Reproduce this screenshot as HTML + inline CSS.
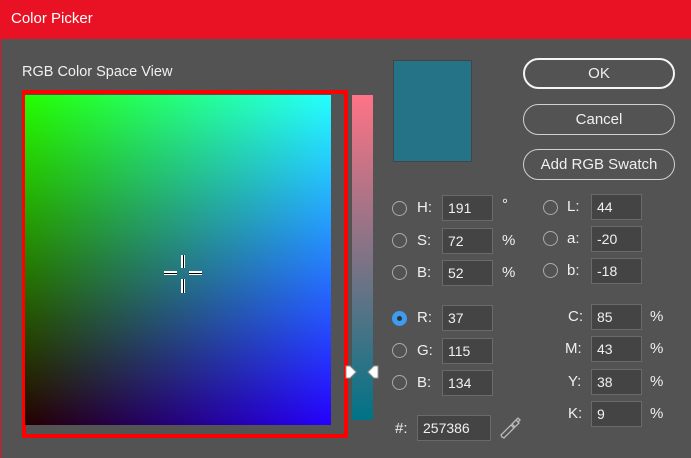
<!DOCTYPE html>
<html><head><style>
*{margin:0;padding:0;box-sizing:border-box}
body{width:691px;height:458px;background:#535353;font-family:"Liberation Sans",sans-serif;color:#f0f0f0;position:relative;overflow:hidden}
.a{position:absolute}
.title{left:0;top:0;width:691px;height:39px;background:#e81224;font-size:15px;line-height:37px;padding-left:11px;color:#fff}
.lbl{font-size:14px}
.inp{position:absolute;width:51px;height:26px;border:1px solid #6a6a6a;background:#444;font-size:14px;line-height:24px;padding-left:5px;color:#f0f0f0}
.rad{position:absolute;width:15px;height:15px;border:1px solid #aaa;border-radius:50%}
.t{position:absolute;font-size:15px;line-height:26px}
.btn{position:absolute;left:523px;width:152px;height:31px;border:1px solid #d0d0d0;border-radius:16px;text-align:center;font-size:15px;line-height:29px}
.bar{position:absolute;background:#fff}
.bar::after{content:"";position:absolute;background:#000}
.v{width:4px}.v::after{left:1.5px;top:0;width:1px;height:100%}
.h{height:4px}.h::after{top:1.5px;left:0;height:1px;width:100%}
</style></head><body>
<div class="a" style="left:0;top:0;width:1px;height:458px;background:#e8112d"></div>
<div class="a title">Color Picker</div>
<div class="a lbl" style="left:22px;top:64px;font-size:14.5px">RGB Color Space View</div>
<div class="a" style="left:22px;top:90px;width:326px;height:348px;border:4px solid #ff0000"></div>
<div class="a" style="left:25px;top:95px;width:306px;height:330px;background:linear-gradient(to right,rgb(37,0,0),rgb(37,0,255))">
<div style="position:absolute;inset:0;background:linear-gradient(to bottom,rgb(0,255,0),rgb(0,0,0));mix-blend-mode:screen"></div></div>
<div class="bar v" style="left:181px;top:255px;height:13px"></div>
<div class="bar v" style="left:181px;top:279px;height:14px"></div>
<div class="bar h" style="left:164px;top:271px;width:13px"></div>
<div class="bar h" style="left:189px;top:271px;width:13px"></div>
<div class="a" style="left:352px;top:95px;width:21px;height:325px;background:linear-gradient(to bottom,rgb(255,115,134),rgb(0,115,134))"></div>
<svg class="a" style="left:345px;top:364px" width="35" height="16"><path d="M1 2h4l6 6-6 6H1z" fill="#fff" stroke="#999"/><path d="M33 2h-4l-6 6 6 6h4z" fill="#fff" stroke="#999"/></svg>
<div class="a" style="left:393px;top:60px;width:79px;height:102px;background:#257386;border:1px solid #444"></div>
<div class="btn" style="top:58px;border:2px solid #f4f4f4;line-height:28px">OK</div>
<div class="btn" style="top:104px">Cancel</div>
<div class="btn" style="top:149px">Add RGB Swatch</div>

<div class="rad" style="left:392px;top:201px"></div><div class="t" style="left:417px;top:195px">H:</div><div class="inp" style="left:442px;top:195px">191</div><div class="t" style="left:502px;top:192px">°</div>
<div class="rad" style="left:392px;top:233px"></div><div class="t" style="left:417px;top:228px">S:</div><div class="inp" style="left:442px;top:228px">72</div><div class="t" style="left:502px;top:228px">%</div>
<div class="rad" style="left:392px;top:265px"></div><div class="t" style="left:417px;top:260px">B:</div><div class="inp" style="left:442px;top:260px">52</div><div class="t" style="left:502px;top:260px">%</div>
<div class="rad" style="left:392px;top:311px;background:#3d9bf0;border:none"><div style="position:absolute;left:5px;top:5px;width:5px;height:5px;border-radius:50%;background:#333"></div></div><div class="t" style="left:417px;top:305px">R:</div><div class="inp" style="left:442px;top:305px">37</div>
<div class="rad" style="left:392px;top:343px"></div><div class="t" style="left:417px;top:338px">G:</div><div class="inp" style="left:442px;top:338px">115</div>
<div class="rad" style="left:392px;top:375px"></div><div class="t" style="left:417px;top:370px">B:</div><div class="inp" style="left:442px;top:370px">134</div>
<div class="t" style="left:395px;top:416px">#:</div><div class="inp" style="left:417px;top:415px;width:74px">257386</div>
<svg class="a" style="left:498px;top:414px" width="24" height="26"><path d="M4 23l-1-2 10-10 3 3-10 10z M14 10l4-4 3 3-4 4z M18 6l2-2 2 2-2 2" fill="none" stroke="#bbb" stroke-width="1.3"/></svg>

<div class="rad" style="left:543px;top:200px"></div><div class="t" style="left:567px;top:194px">L:</div><div class="inp" style="left:591px;top:194px">44</div>
<div class="rad" style="left:543px;top:231px"></div><div class="t" style="left:567px;top:226px">a:</div><div class="inp" style="left:591px;top:226px">-20</div>
<div class="rad" style="left:543px;top:263px"></div><div class="t" style="left:567px;top:258px">b:</div><div class="inp" style="left:591px;top:258px">-18</div>
<div class="t" style="left:568px;top:304px">C:</div><div class="inp" style="left:591px;top:304px">85</div><div class="t" style="left:650px;top:304px">%</div>
<div class="t" style="left:565px;top:336px">M:</div><div class="inp" style="left:591px;top:336px">43</div><div class="t" style="left:650px;top:336px">%</div>
<div class="t" style="left:568px;top:369px">Y:</div><div class="inp" style="left:591px;top:369px">38</div><div class="t" style="left:650px;top:369px">%</div>
<div class="t" style="left:568px;top:401px">K:</div><div class="inp" style="left:591px;top:401px">9</div><div class="t" style="left:650px;top:401px">%</div>
</body></html>
